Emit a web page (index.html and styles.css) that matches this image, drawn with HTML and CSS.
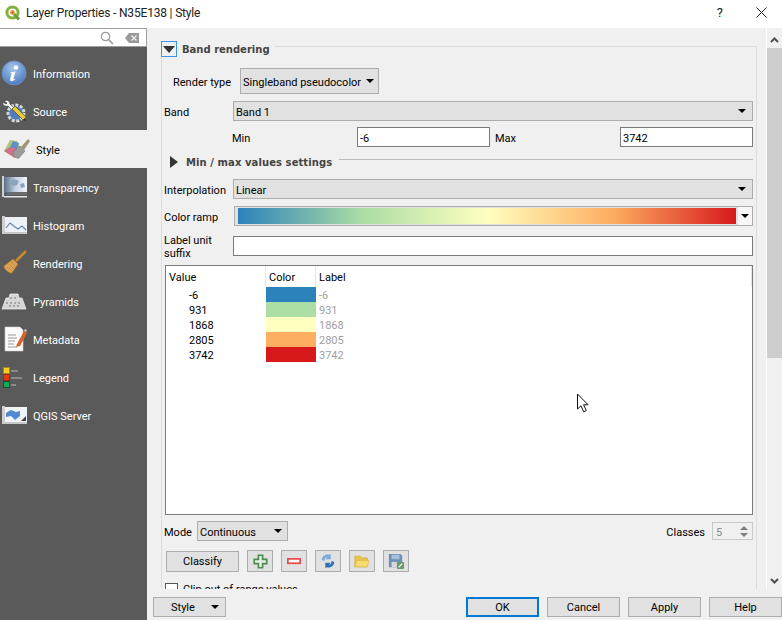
FILE: index.html
```html
<!DOCTYPE html>
<html lang="en">
<head>
<meta charset="utf-8">
<title>Layer Properties - N35E138 | Style</title>
<link rel="stylesheet" href="styles.css">
</head>
<body>
<div class="window">
  <header class="titlebar">
    <svg class="qgis-logo" width="16" height="16" viewBox="0 0 16 16"><circle cx="7.5" cy="7.5" r="5.6" fill="none" stroke="#7fb241" stroke-width="3"/><path d="M9 9l5 5.5" stroke="#6c9e35" stroke-width="3" fill="none"/><circle cx="7.5" cy="7.5" r="2.4" fill="#e8a23a"/><circle cx="7.5" cy="7.5" r="1" fill="#c9482f"/></svg>
    <span class="title-text">Layer Properties - N35E138 | Style</span>
    <span class="title-help">?</span>
    <svg class="title-close" width="11" height="11" viewBox="0 0 11 11"><path d="M.5.5l10 10M10.5.5l-10 10" stroke="#222" fill="none"/></svg>
  </header>
  <div class="body">
    <aside class="sidebar">
      <div class="search">
        <svg width="14" height="14" viewBox="0 0 14 14"><circle cx="5.5" cy="5.5" r="4.2" fill="none" stroke="#9a9a9a" stroke-width="1.2"/><path d="M8.6 8.6l4.4 4.4" stroke="#9a9a9a" stroke-width="1.6"/></svg>
        <svg class="clear" width="14" height="10" viewBox="0 0 14 10"><path d="M4 0h10v10H4L0 5z" fill="#9a9a9a"/><path d="M6.5 2.5l5 5M11.5 2.5l-5 5" stroke="#eee" stroke-width="1.3"/></svg>
      </div>
      <nav class="nav">
        <div class="nav-item">
          <svg class="nav-icon" width="26" height="26" viewBox="0 0 26 26"><defs><radialGradient id="ib" cx=".45" cy=".3" r=".8"><stop offset="0" stop-color="#a6c6ec"/><stop offset="1" stop-color="#3e72b8"/></radialGradient></defs><circle cx="13" cy="13" r="12" fill="url(#ib)" stroke="#6d8fc2"/><circle cx="15" cy="7.5" r="2.2" fill="#fff"/><path d="M9.5 12.5l5-1-2.2 8 2-1-.6 1.600c-2 1.400-5 1.800-4.600-.6l1.600-6.500-1.600.2z" fill="#fff"/></svg>
          <span>Information</span>
        </div>
        <div class="nav-item">
          <svg class="nav-icon" width="26" height="26" viewBox="0 0 26 26"><circle cx="15" cy="15" r="8" fill="#4f7fbb" stroke="#d8d8d8" stroke-width="3" stroke-dasharray="3 1.6"/><path d="M3 3c3-2 6 0 6 3l4 4-2 2-4-4c-3 1-6-1-5-4l3 2 1-1z" fill="#f3f3f3" stroke="#333" stroke-width=".6"/><path d="M11 11l11 11 2-1 1-2-11-11z" fill="#e8c93c" stroke="#5a4a10" stroke-width=".7"/><path d="M22 22l3 1-1-3z" fill="#333"/></svg>
          <span>Source</span>
        </div>
        <div class="nav-item active">
          <svg class="nav-icon" width="26" height="22" viewBox="0 0 26 22"><path d="M0 13L6 2l7 1 3 6-5 11z" fill="#a9c97d"/><path d="M0 13l6-4 7 1-2 10z" fill="#d0708a"/><path d="M6 9l3-6 6 2-2 6z" fill="#5e8fc8"/><path d="M9 14l7-6 5 5-6 7c-2 1-7-2-6-6z" fill="#9b9b9b" stroke="#777" stroke-width=".6"/><path d="M17 9l7-8 2 2-6 9z" fill="#a39474"/></svg>
          <span>Style</span>
        </div>
        <div class="nav-item">
          <svg class="nav-icon" width="26" height="24" viewBox="0 0 26 24"><defs><linearGradient id="tg" x1="0" y1="0" x2="1" y2="0"><stop offset="0" stop-color="#5a6f86"/><stop offset=".5" stop-color="#c3d2e4"/><stop offset="1" stop-color="#f2f5f9"/></linearGradient></defs><rect x="1" y="1" width="2" height="21" fill="#cfcfcf"/><rect x="3" y="2" width="23" height="15" fill="url(#tg)"/><path d="M8 7l5-3 5 2-2 4-4 1zM19 9l4-1 1 4-4 1z" fill="#8da3bb"/><rect x="3" y="17" width="23" height="3" fill="#6c6c6c"/><rect x="3" y="21" width="23" height="1.5" fill="#e6e6e6"/><rect x="4" y="18" width="2" height="2.4" fill="#2d5ea8"/></svg>
          <span>Transparency</span>
        </div>
        <div class="nav-item">
          <svg class="nav-icon" width="26" height="20" viewBox="0 0 26 20"><rect x="1" y="1" width="3" height="18" fill="#cfcfcf"/><rect x="4" y="2" width="22" height="15" fill="#eef1f5"/><rect x="3" y="17" width="23" height="2" fill="#c8c8c8"/><path d="M5 13l4-5 5 4 3 2 4-3 4 4" fill="none" stroke="#5c84b5" stroke-width="1.1"/></svg>
          <span>Histogram</span>
        </div>
        <div class="nav-item">
          <svg class="nav-icon" width="26" height="26" viewBox="0 0 26 26"><path d="M15 11L25 1" stroke="#c98a2a" stroke-width="2.6"/><path d="M3 16l9-7 5 5-6 9c-1.500 1-8-3-8-7z" fill="#d9a257" stroke="#a8741f" stroke-width=".7"/><path d="M6 17l5 4M8 14l5 5M10 12l4 4" stroke="#b0803a" stroke-width=".6"/></svg>
          <span>Rendering</span>
        </div>
        <div class="nav-item">
          <svg class="nav-icon" width="26" height="20" viewBox="0 0 26 20"><path d="M1 18l4-11h3l1-4h8l1 4h3l4 11z" fill="#d6d6d6" stroke="#f2f2f2" stroke-width=".7"/><path d="M5 12h16M9 7h8M8 15h10" stroke="#777" stroke-width="1" stroke-dasharray="2 2"/></svg>
          <span>Pyramids</span>
        </div>
        <div class="nav-item">
          <svg class="nav-icon" width="26" height="26" viewBox="0 0 26 26"><path d="M4 1h15l3 3v21H4z" fill="#fbfbfb" stroke="#ccc" stroke-width=".6"/><path d="M7 9h8M7 12h9M7 15h7M7 18h6M7 21h9" stroke="#999"/><path d="M16 18l7-13 3 2-7 13-4 1z" fill="#d9632c"/><path d="M23 5l1-2 2 1-1 2z" fill="#c9c9c9"/></svg>
          <span>Metadata</span>
        </div>
        <div class="nav-item">
          <svg class="nav-icon" width="26" height="22" viewBox="0 0 26 22"><rect x="2.500" y="1.500" width="6" height="6" fill="#fdd017" stroke="#a5821b"/><rect x="2.500" y="8.500" width="6" height="6" fill="#e83a10" stroke="#8a3316"/><rect x="2.500" y="15.500" width="6" height="6" fill="#0fae50" stroke="#17502e"/><rect x="10" y="4" width="7" height="2" fill="#8a8a8a"/><rect x="10" y="11" width="11" height="2" fill="#8a8a8a"/><rect x="10" y="18" width="5" height="2" fill="#8a8a8a"/></svg>
          <span>Legend</span>
        </div>
        <div class="nav-item">
          <svg class="nav-icon" width="26" height="20" viewBox="0 0 26 20"><rect x="1" y="1" width="3" height="18" fill="#cfcfcf"/><rect x="4" y="2" width="22" height="15" fill="#f0f3f7"/><rect x="3" y="17" width="23" height="2" fill="#c8c8c8"/><path d="M5 8l5-3 5 2 4-1v5l-5 4-4-4-5 1z" fill="#4f89cf"/><path d="M20 16l5-5v5z" fill="#444"/></svg>
          <span>QGIS Server</span>
        </div>
      </nav>
    </aside>
    <main class="main">
      <div class="scroll">
        <div class="viewport">
          <section class="group">
            <div class="group-head">
              <span class="toggle"><i class="tri-down"></i></span>
              <span class="group-title">Band rendering</span>
            </div>
            <div class="row row-render">
              <label class="render-label">Render type</label>
              <div class="select select-render"><span>Singleband pseudocolor</span><i class="caret"></i></div>
            </div>
            <div class="row row-band">
              <label class="col-label">Band</label>
              <div class="select grow"><span>Band 1</span><i class="caret"></i></div>
            </div>
            <div class="row row-minmax">
              <label class="min-label">Min</label>
              <div class="input input-val">-6</div>
              <label class="max-label">Max</label>
              <div class="input input-val">3742</div>
            </div>
            <div class="row row-section">
              <i class="tri-right"></i>
              <span class="group-title">Min / max values settings</span>
              <span class="rule"></span>
            </div>
            <div class="row row-interp">
              <label class="col-label">Interpolation</label>
              <div class="select grow"><span>Linear</span><i class="caret"></i></div>
            </div>
            <div class="row row-ramp">
              <label class="col-label">Color ramp</label>
              <div class="ramp"><div class="ramp-bar"></div><div class="ramp-drop"><i class="caret"></i></div></div>
            </div>
            <div class="row row-suffix">
              <label class="col-label suffix-label">Label unit suffix</label>
              <div class="input grow"></div>
            </div>
            <div class="table">
              <div class="thead">
                <div class="th col-value">Value</div>
                <div class="th col-color">Color</div>
                <div class="th col-label-c">Label</div>
              </div>
              <div class="tr"><div class="td-value">-6</div><div class="swatch c1"></div><div class="td-label">-6</div></div>
              <div class="tr"><div class="td-value">931</div><div class="swatch c2"></div><div class="td-label">931</div></div>
              <div class="tr"><div class="td-value">1868</div><div class="swatch c3"></div><div class="td-label">1868</div></div>
              <div class="tr"><div class="td-value">2805</div><div class="swatch c4"></div><div class="td-label">2805</div></div>
              <div class="tr"><div class="td-value">3742</div><div class="swatch c5"></div><div class="td-label">3742</div></div>
              <svg class="cursor" width="13" height="20" viewBox="0 0 13 20"><path d="M1.500 1v15l3.500-3.200 2.700 6 2.600-1.200-2.700-5.800h4.500z" fill="#fff" stroke="#111"/></svg>
            </div>
            <div class="row row-mode">
              <label class="mode-label">Mode</label>
              <div class="select select-mode"><span>Continuous</span><i class="caret"></i></div>
              <span class="spacer"></span>
              <label class="classes-label">Classes</label>
              <div class="spin"><span class="spin-val">5</span><div class="spin-btns"><i class="spin-up"></i><i class="spin-down"></i></div></div>
            </div>
            <div class="row row-actions">
              <button class="btn btn-classify">Classify</button>
              <button class="btn btn-icon"><svg width="15" height="15" viewBox="0 0 18 18"><path d="M6.500 1.500h5v5h5v5h-5v5h-5v-5h-5v-5h5z" fill="#e8f0e8" stroke="#4c8a4f" stroke-width="2"/></svg></button>
              <button class="btn btn-icon"><svg width="14" height="7" viewBox="0 0 16 8"><rect x="1" y="1" width="14" height="5" fill="#fff" stroke="#ec4b4b" stroke-width="2"/></svg></button>
              <button class="btn btn-icon"><svg width="16" height="16" viewBox="0 0 18 18"><path d="M2 8c0-4 4-7 8-6l2-1v6h-6l2-2C6 4.500 5 7 5 9z" fill="#7aa8de"/><path d="M16 10c0 4-4 7-8 6l-2 1v-6h6l-2 2c2 .5 3-2 3-4z" fill="#2f6fb5"/></svg></button>
              <button class="btn btn-icon"><svg width="16" height="13" viewBox="0 0 18 14"><path d="M1 13V1h6l2 2h6v10z" fill="#e3c44d" stroke="#d4b445"/><path d="M1 13l2-7h14l-2 7z" fill="#f7dc6f" stroke="#d4b445" stroke-width=".6"/></svg></button>
              <button class="btn btn-icon"><svg width="16" height="16" viewBox="0 0 18 18"><path d="M1 1h13l2 2v13H1z" fill="#6f8fb8"/><rect x="4" y="2" width="9" height="5" fill="#a8bfdc"/><rect x="4" y="10" width="8" height="6" fill="#d8d8d8"/><rect x="10" y="10" width="8" height="8" rx="1" fill="#6a9a6c"/><path d="M12 16l4-4" stroke="#fff" stroke-width="1.400"/></svg></button>
            </div>
            <div class="row row-clip">
              <span class="checkbox"></span>
              <span class="clip-text">Clip out of range values</span>
            </div>
          </section>
        </div>
        <div class="scrollbar">
          <div class="sb-btn"><svg width="9" height="6" viewBox="0 0 9 6"><path d="M1 5l3.500-3.500L8 5" fill="none" stroke="#505050" stroke-width="2"/></svg></div>
          <div class="sb-thumb"></div>
          <div class="sb-track"></div>
          <div class="sb-btn"><svg width="9" height="6" viewBox="0 0 9 6"><path d="M1 1l3.500 3.500L8 1" fill="none" stroke="#505050" stroke-width="2"/></svg></div>
        </div>
      </div>
      <footer class="footer">
        <button class="btn btn-foot btn-style"><span>Style</span><i class="caret"></i></button>
        <span class="spacer"></span>
        <button class="btn btn-foot btn-default">OK</button>
        <button class="btn btn-foot">Cancel</button>
        <button class="btn btn-foot">Apply</button>
        <button class="btn btn-foot">Help</button>
      </footer>
    </main>
  </div>
</div>
</body>
</html>
```
FILE: styles.css
```css
* { box-sizing: border-box; }
html, body { margin: 0; padding: 0; }
body { font-family: Roboto, "Liberation Sans", sans-serif; font-size: 11px; color: #000; background: #f0f0f0; }
.window { width: 782px; height: 620px; display: flex; flex-direction: column; overflow: hidden; }

.titlebar { height: 28px; background: #fff; display: flex; align-items: center; padding-left: 5px; flex: none; }
.qgis-logo { flex: none; margin-top: -2px; }
.title-text { margin-left: 5px; font-size: 12px; letter-spacing: -.18px; color: #222; margin-top: -2px; }
.title-help { margin-left: auto; font-size: 13px; color: #222; margin-right: 33px; margin-top: -3px; }
.title-close { margin-right: 15px; margin-top: -3px; }

.body { flex: 1; display: flex; min-height: 0; }

.sidebar { width: 147px; flex: none; background: #5a5a5a; display: flex; flex-direction: column; }
.search { height: 19px; background: #fff; border: 1px solid #a0a0a0; border-left: 0; display: flex; align-items: center; justify-content: flex-end; gap: 11px; padding-right: 7px; flex: none; }
.nav { display: flex; flex-direction: column; padding-top: 7px; }
.nav-item { height: 38px; display: flex; align-items: center; color: #fff; position: relative; padding: 2px 0 0 33px; }
.nav-icon { position: absolute; left: 1px; top: 50%; transform: translateY(-50%); }
.nav-item.active { background: #f0f0f0; color: #000; padding-left: 36px; }
.nav-item.active .nav-icon { left: 4px; }

.main { flex: 1; min-width: 0; display: flex; flex-direction: column; }
.scroll { height: 561px; display: flex; flex: none; }
.viewport { flex: 1; min-width: 0; overflow: hidden; padding: 18px 9px 0 14px; border-right: 1px solid #fff; }

.group { border: 1px solid #dcdcdc; height: 640px; }
.group-head { display: flex; align-items: center; height: 16px; margin: -6px 0 0 -1px; }
.toggle { width: 16px; height: 16px; border: 1px solid #3a94e8; background: #f0f0f0; display: flex; align-items: center; justify-content: center; }
.tri-down { width: 0; height: 0; border-left: 6px solid transparent; border-right: 6px solid transparent; border-top: 7px solid #333; }
.tri-right { width: 0; height: 0; border-top: 6px solid transparent; border-bottom: 6px solid transparent; border-left: 8px solid #333; flex: none; }
.group-title { font-family: "DejaVu Sans", sans-serif; font-weight: bold; font-size: 10px; color: #444; background: #f0f0f0; padding: 0 5px; }

.row { display: flex; align-items: center; padding: 0 3px 0 2px; }
.row label { padding-top: 2px; }
.col-label { width: 69px; flex: none; }
.grow { flex: 1; min-width: 0; }
.spacer { flex: 1; }

.select { height: 20px; background: #e1e1e1; border: 1px solid #adadad; display: flex; align-items: center; justify-content: space-between; padding: 0 6px 0 2px; white-space: nowrap; }
.select span { padding-top: 2px; }
.caret { width: 0; height: 0; border-left: 4px solid transparent; border-right: 4px solid transparent; border-top: 4px solid #000; flex: none; }
.input { height: 20px; background: #fff; border: 1px solid #7a7a7a; padding: 2px 2px 0; display: flex; align-items: center; }

.row-render { margin-top: 11px; padding-left: 11px; }
.render-label { width: 67px; flex: none; }
.select-render { width: 139px; height: 26px; padding-right: 4px; }
.row-band { margin-top: 7px; }
.row-minmax { margin-top: 6px; }
.min-label { margin-left: 68px; width: 125px; flex: none; }
.input-val { width: 133px; flex: none; }
.max-label { margin-left: 5px; width: 125px; flex: none; }
.row-section { margin-top: 7px; height: 16px; padding-left: 8px; }
.row-section .group-title { margin-left: 3px; padding-right: 7px; letter-spacing: .08px; }
.rule { flex: 1; height: 1px; background: #bdbdbd; margin-top: -6px; }
.row-interp { margin-top: 9px; }
.row-ramp { margin-top: 7px; }
.ramp { flex: 1; margin-left: 1px; height: 20px; background: #e1e1e1; border: 1px solid #adadad; display: flex; align-items: center; padding-left: 3px; }
.ramp-bar { width: 498px; height: 16px; background: linear-gradient(to right, #2b83ba, #abdda4 25%, #ffffbf 50%, #fdae61 75%, #d7191c); }
.ramp-drop { flex: 1; height: 18px; margin-left: 2px; background: #f7f7f7; display: flex; align-items: center; justify-content: center; }
.row-suffix { margin-top: 7px; height: 26px; }
.suffix-label { line-height: 13px; padding-right: 10px; }

.table { position: relative; margin: 6px 3px 0 3px; height: 250px; background: #fff; border: 1px solid #7a7a7a; }
.thead { display: flex; height: 21px; align-items: center; }
.th { height: 21px; display: flex; align-items: center; padding: 2px 0 0 3px; border-right: 1px solid #e6e6e6; }
.col-value { width: 100px; }
.col-color { width: 50px; }
.col-label-c { flex: 1; }
.tr { display: flex; height: 15px; align-items: center; }
.td-value { width: 100px; padding: 2px 0 0 23px; }
.swatch { width: 50px; height: 15px; }
.td-label { padding: 2px 0 0 3px; color: #a0a0a0; }
.c1 { background: #2b83ba; }
.c2 { background: #abdda4; }
.c3 { background: #ffffbf; }
.c4 { background: #fdae61; }
.c5 { background: #d7191c; }
.cursor { position: absolute; left: 410px; top: 127px; }

.row-mode { margin-top: 6px; }
.mode-label { width: 33px; flex: none; }
.select-mode { width: 91px; padding-right: 5px; }
.classes-label { margin-right: 7px; }
.spin { width: 41px; height: 18px; border: 1px solid #c8c8c8; display: flex; align-items: center; justify-content: space-between; padding: 0 2px 0 3px; color: #8a8a8a; }
.spin-val { padding-top: 2px; }
.spin-btns { display: flex; flex-direction: column; gap: 3px; width: 13px; align-items: center; }
.spin-up { width: 0; height: 0; border-left: 4px solid transparent; border-right: 4px solid transparent; border-bottom: 4px solid #808080; }
.spin-down { width: 0; height: 0; border-left: 4px solid transparent; border-right: 4px solid transparent; border-top: 4px solid #808080; }

.btn { font: inherit; color: #000; background: #e1e1e1; border: 1px solid #adadad; padding: 0; display: flex; align-items: center; justify-content: center; }
.row-actions { margin-top: 9px; padding-left: 4px; gap: 8px; }
.btn-classify { width: 73px; height: 21px; }
.btn-icon { width: 26px; height: 22px; }
.row-clip { margin-top: 11px; padding-left: 3px; gap: 5px; }
.checkbox { width: 13px; height: 13px; background: #fff; border: 1px solid #555; flex: none; }

.scrollbar { width: 15px; flex: none; display: flex; flex-direction: column; margin-top: 3px; background: #f0f0f0; }
.sb-btn { height: 17px; display: flex; align-items: center; justify-content: center; flex: none; }
.sb-thumb { height: 310px; background: #cdcdcd; flex: none; }
.sb-track { flex: 1; }

.footer { height: 31px; flex: none; display: flex; align-items: flex-start; padding: 8px 0 0 6px; gap: 8px; }
.btn-foot { width: 73px; height: 20px; }
.btn-default { border: 2px solid #0078d7; }
.btn-style { justify-content: space-between; padding: 0 6px 0 17px; }
```
